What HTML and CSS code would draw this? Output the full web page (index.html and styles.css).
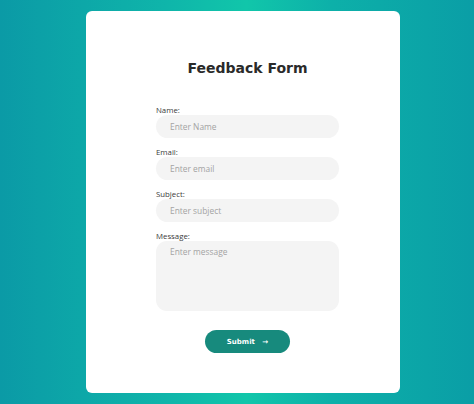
FILE: index.html
```html
<!DOCTYPE html>
<html lang="en">
<head>
<meta charset="utf-8">
<title>Feedback Form</title>
<link rel="stylesheet" href="styles.css">
</head>
<body>
  <main class="card">
    <form class="form">
      <h1 class="title">Feedback Form</h1>
      <div class="field">
        <label class="label" for="name">Name:</label>
        <input class="input" id="name" type="text" placeholder="Enter Name">
      </div>
      <div class="field">
        <label class="label" for="email">Email:</label>
        <input class="input" id="email" type="email" placeholder="Enter email">
      </div>
      <div class="field">
        <label class="label" for="subject">Subject:</label>
        <input class="input" id="subject" type="text" placeholder="Enter subject">
      </div>
      <div class="field">
        <label class="label" for="message">Message:</label>
        <textarea class="textarea" id="message" placeholder="Enter message"></textarea>
      </div>
      <div class="actions">
        <button class="submit" type="button">Submit <span class="arrow">&#8594;</span></button>
      </div>
    </form>
  </main>
</body>
</html>
```

FILE: styles.css
```css
* { box-sizing: border-box; }

html, body {
  margin: 0;
  height: 404px;
}

body {
  background: linear-gradient(90deg, #0b9aa6 0%, #0fb5aa 35%, #11c6aa 52%, #0db0a9 70%, #0a9ea6 100%);
  padding: 11px 74px 11px 86px;
  font-family: "Open Sans", "DejaVu Sans", sans-serif;
  overflow: hidden;
}

.card {
  background: #ffffff;
  border-radius: 6px;
  width: 314px;
  height: 382px;
  padding: 45px 0 0 70px;
}

.form {
  width: 183px;
  display: flex;
  flex-direction: column;
}

.title {
  margin: 0 0 25px;
  text-align: center;
  font-family: "DejaVu Sans", sans-serif;
  font-weight: bold;
  font-size: 14px;
  line-height: 24px;
  color: #2a2a2a;
}

.field {
  display: flex;
  flex-direction: column;
  margin-bottom: 9px;
}

.label {
  font-size: 7.8px;
  line-height: 10px;
  color: #3a3a3a;
}

.input, .textarea {
  border: none;
  outline: none;
  background: #f4f4f4;
  font-family: "Open Sans", "DejaVu Sans", sans-serif;
  font-size: 8.4px;
  color: #444;
  padding: 0 14px;
  width: 183px;
}

.input {
  height: 23px;
  border-radius: 12px;
}

.textarea {
  height: 70px;
  border-radius: 11px;
  padding-top: 5px;
  resize: none;
}

.input::placeholder, .textarea::placeholder {
  color: #a3a3a3;
}

.actions {
  display: flex;
  justify-content: center;
  margin-top: 10px;
}

.submit {
  border: none;
  background: #178a7d;
  color: #ffffff;
  width: 85px;
  height: 23px;
  border-radius: 12px;
  font-family: "DejaVu Sans", sans-serif;
  font-weight: bold;
  font-size: 7px;
  padding: 0;
}

.arrow {
  margin-left: 5px;
}
```
